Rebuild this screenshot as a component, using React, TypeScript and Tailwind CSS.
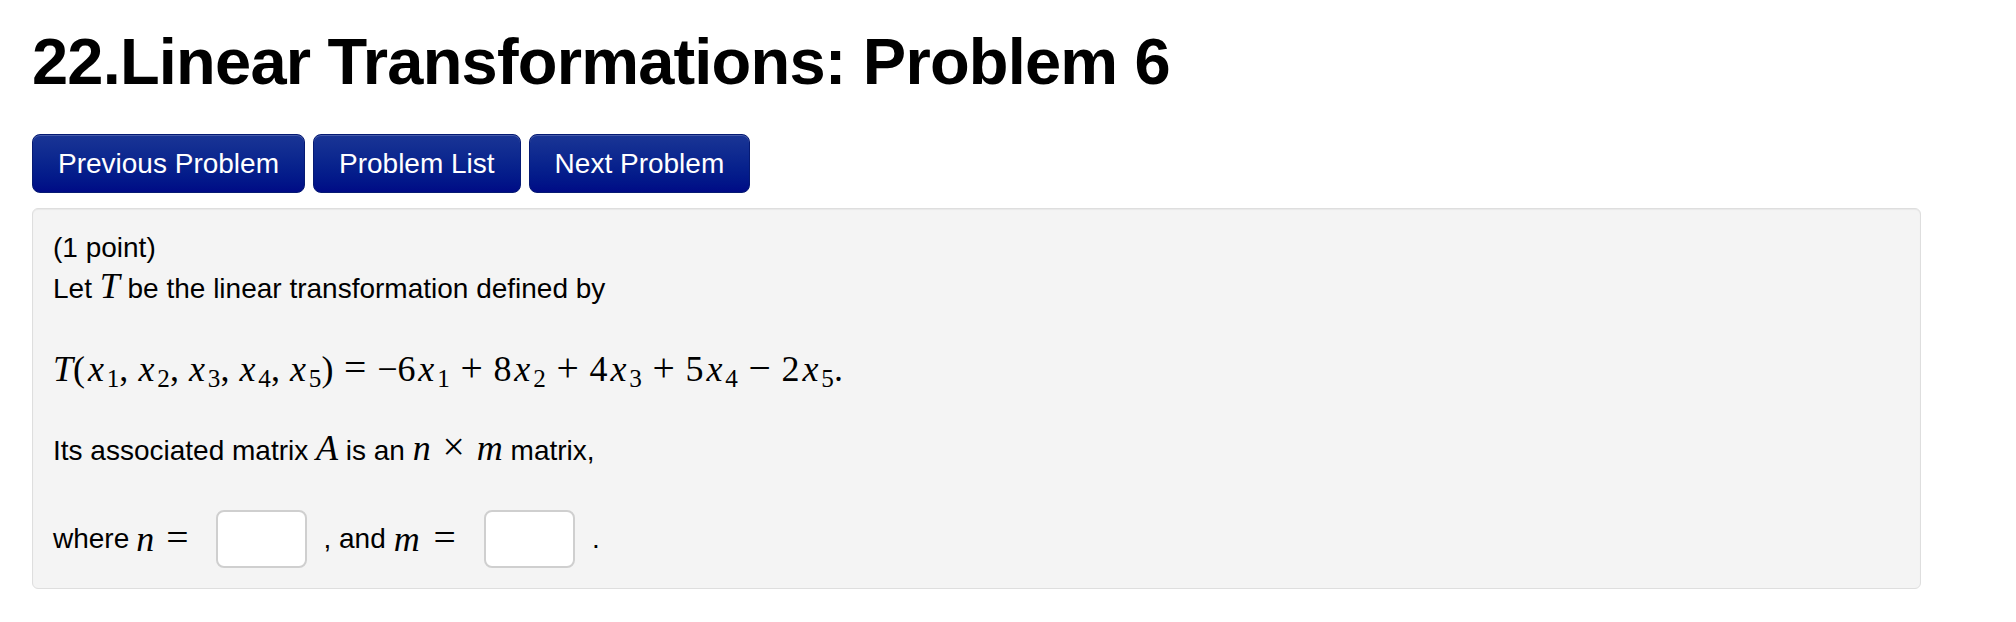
import React from 'react';

const sans = "font-['Liberation_Sans',Arial,sans-serif]";
const serif = "font-['Liberation_Serif','Times_New_Roman',serif]";

function V({ c, wide }: { c: string; wide?: boolean }) {
  return <span className={`${serif} italic ${wide ? 'px-[0.08em]' : ''}`}>{c}</span>;
}

function Xi({ i }: { i: number }) {
  return (
    <span className="whitespace-nowrap">
      <V c="x" wide />
      <sub className="text-[0.7em] -bottom-[0.22em] not-italic">{i}</sub>
    </span>
  );
}

// relation / binary operator, a bit larger than the letters like the TeX font
function Op({ c, m = 'mx-[0.27em]' }: { c: string; m?: string }) {
  return <span className={`${serif} text-[1.1em] leading-none ${m}`}>{c}</span>;
}

function Comma() {
  return <span className="mr-[0.2em]">,</span>;
}

function Box() {
  return <span className="inline-block align-middle w-[91px] h-[58px] bg-white border-2 border-[#cfcfcf] rounded-[8px]" />;
}

export default function App() {
  const buttons = ['Previous Problem', 'Problem List', 'Next Problem'];

  return (
    <div className={`${sans} bg-white text-black min-h-[622px] px-8 pt-[26px]`}>
      <h1 className="text-[65px] font-bold leading-[72px] tracking-[-0.8px]">
        22.Linear Transformations: Problem 6
      </h1>

      <div className="flex gap-[8px] mt-[36px]">
        {buttons.map((label) => (
          <button
            key={label}
            className="h-[59px] px-[25px] text-[28px] leading-[40px] text-white rounded-[8px] border border-[#061a73] bg-gradient-to-b from-[#1a3595] to-[#000a86] shadow-[inset_0_1px_0_rgba(255,255,255,0.2)]"
          >
            {label}
          </button>
        ))}
      </div>

      <div className="mt-[15px] w-[1889px] bg-[#f4f4f4] border border-[#dedede] rounded-[6px] px-5 pt-[19px] pb-[20px] text-[28px] leading-[40px] shadow-[inset_0_1px_1px_rgba(0,0,0,0.05)]">
        <div>(1 point)</div>
        <div>
          Let <span className="text-[36px] leading-none"><V c="T" /></span> be the linear transformation defined by
        </div>

        <div className={`${serif} text-[36px] leading-[40px] mt-[40px] whitespace-nowrap`}>
          <V c="T" />(<Xi i={1} /><Comma /><Xi i={2} /><Comma /><Xi i={3} /><Comma /><Xi i={4} /><Comma /><Xi i={5} />)
          <Op c="=" />−6<Xi i={1} />
          <Op c="+" />8<Xi i={2} />
          <Op c="+" />4<Xi i={3} />
          <Op c="+" />5<Xi i={4} />
          <Op c="−" />2<Xi i={5} />.
        </div>

        <div className="mt-[39px]">
          Its associated matrix <span className="text-[36px] leading-none"><V c="A" /></span> is an{' '}
          <span className="text-[36px] leading-none">
            <V c="n" />
            <Op c="×" m="mx-[0.3em]" />
            <V c="m" />
          </span>{' '}
          matrix,
        </div>

        <div className="mt-[39px] flex items-center h-[58px]">
          <span>where </span>
          <span className="text-[36px] leading-none ml-[7px]">
            <V c="n" />
            <Op c="=" m="ml-[0.3em]" />
          </span>
          <span className="ml-[28px]"><Box /></span>
          <span className="ml-[16px]">, and</span>
          <span className="text-[36px] leading-none ml-[8px]">
            <V c="m" />
            <Op c="=" m="ml-[0.35em]" />
          </span>
          <span className="ml-[28px]"><Box /></span>
          <span className="ml-[17px]">.</span>
        </div>
      </div>
    </div>
  );
}
